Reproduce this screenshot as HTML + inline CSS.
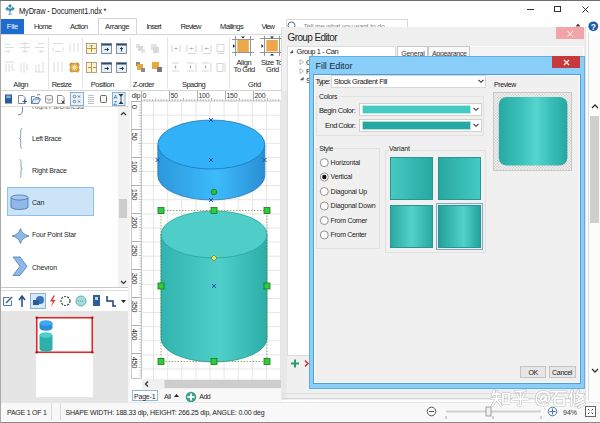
<!DOCTYPE html>
<html><head><meta charset="utf-8">
<style>
*{margin:0;padding:0;box-sizing:border-box}
html,body{width:600px;height:423px;overflow:hidden;background:#fff;font-family:"Liberation Sans",sans-serif;color:#1e1e1e;position:relative}
.a{position:absolute}
.t{position:absolute;white-space:nowrap;line-height:1}
svg{position:absolute;overflow:visible}
</style></head><body>
<!-- ============ TITLE BAR ============ -->
<div class="a" style="left:0;top:0;width:600px;height:1px;background:#6e6e6e"></div>
<svg style="left:5px;top:4px" width="10" height="11" viewBox="0 0 12 14">
 <path d="M6 0 L8.5 2.5 L6 5 L3.5 2.5Z M2.5 3.5 L5 6 L2.5 8.5 L0 6Z M9.5 3.5 L12 6 L9.5 8.5 L7 6Z M6 5 L8.5 7.5 L6 10 L3.5 7.5Z" fill="#2f8bb0"/>
 <path d="M6 9 V13 M4 13 H8" stroke="#3d7c99" stroke-width="1"/>
</svg>
<div class="t" id="ttl" style="left:18.5px;top:7px;font-size:9px;color:#1a1a1a;letter-spacing:-0.2px;transform:scaleX(0.83);transform-origin:0 0">MyDraw - Document1.ndx *</div>
<div class="a" style="left:527px;top:9px;width:7px;height:1px;background:#333"></div>
<div class="a" style="left:554px;top:6px;width:7px;height:6px;border:1px solid #333"></div>
<svg style="left:582px;top:6px" width="7" height="7"><path d="M0.5 0.5 L6.5 6.5 M6.5 0.5 L0.5 6.5" stroke="#333" stroke-width="1"/></svg>

<!-- ============ TABS ============ -->
<div class="a" style="left:1px;top:19px;width:23px;height:15px;background:#1e6cd0"></div>
<div class="t" style="left:6.8px;top:23px;font-size:7.5px;color:#fff;letter-spacing:-0.2px">File</div>
<div class="t" style="left:34px;top:23px;font-size:7.5px;letter-spacing:-0.61px">Home</div>
<div class="t" style="left:70px;top:23px;font-size:7.5px;letter-spacing:-0.53px">Action</div>
<div class="a" style="left:98px;top:18px;width:39px;height:17px;border:1px solid #d6d6d6;border-bottom:none;background:#fff"></div>
<div class="t" style="left:105px;top:23px;font-size:7.5px;letter-spacing:-0.37px">Arrange</div>
<div class="t" style="left:146.5px;top:23px;font-size:7.5px;letter-spacing:-0.73px">Insert</div>
<div class="t" style="left:180.5px;top:23px;font-size:7.5px;letter-spacing:-0.71px">Review</div>
<div class="t" style="left:220px;top:23px;font-size:7.5px;letter-spacing:-0.54px">Mailings</div>
<div class="t" style="left:261.5px;top:23px;font-size:7.5px;letter-spacing:-0.9px">View</div>
<div class="a" style="left:286px;top:19px;width:122px;height:14px;border:1px solid #d8d8d8;background:#fff"></div>
<svg style="left:287px;top:21px" width="10" height="10"><circle cx="4.5" cy="4.5" r="3.5" fill="none" stroke="#4a6a8a" stroke-width="1"/></svg>
<div class="t" style="left:303.5px;top:22.5px;font-size:7px;color:#8a8a8a;letter-spacing:-0.19px">Tell me what you want to do</div>
<div class="a" style="left:0;top:34px;width:600px;height:1px;background:#d8d8d8"></div>

<!-- ============ RIBBON ============ -->
<div class="a" style="left:0;top:90px;width:600px;height:1px;background:#d4d4d4"></div>
<div class="t" style="left:13.3px;top:81px;font-size:7.5px;letter-spacing:-0.38px">Align</div>
<div class="t" style="left:51.7px;top:81px;font-size:7.5px;letter-spacing:-0.55px">Resize</div>
<div class="t" style="left:90.7px;top:81px;font-size:7.5px;letter-spacing:-0.42px">Position</div>
<div class="t" style="left:132.7px;top:81px;font-size:7.5px;letter-spacing:-0.46px">Z-order</div>
<div class="t" style="left:182px;top:81px;font-size:7.5px;letter-spacing:-0.56px">Spacing</div>
<div class="t" style="left:248px;top:81px;font-size:7.5px;letter-spacing:-0.33px">Grid</div>
<div class="t" style="left:236.5px;top:59px;font-size:7.5px;letter-spacing:-0.38px">Align</div><div class="t" style="left:233.6px;top:66px;font-size:7.5px;letter-spacing:-0.43px">To Grid</div>
<div class="t" style="left:261px;top:59px;font-size:7.5px;letter-spacing:-0.45px">Size To</div><div class="t" style="left:266px;top:66px;font-size:7.5px;letter-spacing:-0.33px">Grid</div>
<div class="a" style="left:48px;top:37px;width:1px;height:52px;background:#e4e4e4"></div>
<div class="a" style="left:82px;top:37px;width:1px;height:52px;background:#e4e4e4"></div>
<div class="a" style="left:130px;top:37px;width:1px;height:52px;background:#e4e4e4"></div>
<div class="a" style="left:167px;top:37px;width:1px;height:52px;background:#e4e4e4"></div>
<div class="a" style="left:229px;top:37px;width:1px;height:52px;background:#e4e4e4"></div>
<svg style="left:0;top:35px" width="286" height="48" viewBox="0 0 286 48">
 <g stroke="#d8d8d8" stroke-width="0.9" fill="none">
  <!-- align -->
  <path d="M5 9.5h5 M5 12.5h9 M5 16.5h4 M9 15v3" stroke="#cfdcea"/><path d="M21 8.5h8 M20 12.5h10 M22 16.5h6 M25 7v11"/><path d="M38 8.5h6 M35 12.5h9 M39 16.5h5 M41 15v3"/>
  <path d="M5 27h10 M6 29v8 M9 29v8 M12 29v6h3"/><path d="M21 28v9 M24 27v11 M27 29v7"/><path d="M36 30v7 M39 29v8 M43 27v10 M35 37h10"/>
  <!-- resize -->
  <path d="M53 8.5h10 M53 12.5v4 M63 12.5v4 M55 16.5h6"/><path d="M70 8v9 M74 8v9 M78 8v9"/>
  <path d="M54 27v10 M58 27v10 M62 27v10"/>
 </g>
 <rect x="70.5" y="28.5" width="8" height="8" fill="#f3c466" stroke="#c98a20" stroke-width="0.8"/><rect x="72.5" y="30.5" width="4" height="4" fill="#fbe6b0"/><path d="M72 27v11 M77 27v11 M69 30h11 M69 35h11" stroke="#b07a20" stroke-width="0.7" stroke-dasharray="1 1"/>
 <!-- position -->
 <g stroke-width="0.8">
  <rect x="86.5" y="8.5" width="10" height="10" fill="#fdf3d4" stroke="#9a8a6a"/><path d="M87 13.5h9" stroke="#c9962e" stroke-width="1"/><path d="M91.5 10v3 M90 11.5l1.5-1.5 1.5 1.5 M91.5 14v3" stroke="#8a6a2a" stroke-width="0.7" fill="none"/>
  <rect x="101.5" y="8.5" width="10" height="10" fill="#e6f0fa" stroke="#6a7a8a"/><path d="M101.5 9.7h10" stroke="#2c4a6a" stroke-width="1.6"/><path d="M104.5 14.5h4 M107 13l1.5 1.5-1.5 1.5" stroke="#222" stroke-width="0.9" fill="none"/>
  <rect x="116.5" y="8.5" width="10" height="10" fill="#e6f0fa" stroke="#6a7a8a"/><path d="M116.5 9.7h10" stroke="#2c4a6a" stroke-width="1.6"/><path d="M121.5 16.5v-4 M120 14l1.5-1.5 1.5 1.5" stroke="#222" stroke-width="0.9" fill="none"/>
  <rect x="86.5" y="27.5" width="10" height="10" fill="#fdf3d4" stroke="#9a8a6a"/><path d="M91.5 28v9" stroke="#c9962e" stroke-width="1"/><path d="M88 32.5h3 M93 32.5h3" stroke="#8a6a2a" stroke-width="0.7"/>
  <rect x="101.5" y="27.5" width="10" height="10" fill="#e6f0fa" stroke="#6a7a8a"/><path d="M101.5 28.7h10" stroke="#2c4a6a" stroke-width="1.6"/><path d="M104.5 33.5h4 M107 32l1.5 1.5-1.5 1.5" stroke="#222" stroke-width="0.9" fill="none"/>
  <rect x="116.5" y="27.5" width="10" height="10" fill="#e6f0fa" stroke="#6a7a8a"/><path d="M116.5 28.7h10" stroke="#2c4a6a" stroke-width="1.6"/><path d="M119.5 33.5h4 M122 32l1.5 1.5-1.5 1.5" stroke="#222" stroke-width="0.9" fill="none"/>
 </g>
 <!-- z-order -->
 <rect x="136" y="9" width="4" height="4" fill="#e2e2e2"/><rect x="138" y="11" width="5" height="5" fill="#dadada"/><rect x="141" y="14" width="4" height="4" fill="#e4e4e4"/>
 <rect x="151" y="9" width="6" height="6" fill="#e2e2e2"/><rect x="153" y="12" width="6" height="6" fill="#d8d8d8"/>
 <rect x="136" y="27" width="4" height="4" fill="#8a8a8a"/><rect x="137" y="29" width="6" height="6" fill="#e4a83c"/><rect x="141" y="33" width="4" height="4" fill="#8a8a8a"/>
 <rect x="152" y="27" width="7" height="7" fill="#eaa838"/><rect x="157" y="32" width="5" height="5" fill="#7a7a7a"/>
 <!-- spacing -->
 <g stroke="#d0d0d0" fill="none" stroke-width="0.9">
  <path d="M172 10v7 M180 10v7 M174 13.5h4"/><path d="M187 10v7 M196 10v7 M189 13.5h5 M188 18.5h8" /><path d="M202 10v7 M211 10v7 M204 13.5h5 M203 18.5h8"/><path d="M217 9.5h7v7h-7z M218 18.5h6"/>
  <path d="M172 28h7 M172 36h7 M175.5 30v4"/><path d="M187 28h7 M187 36h7 M190.5 30v4 M196 28v9"/><path d="M202 28h7 M202 36h7 M205.5 30v4 M211 28v9"/><path d="M217 28.5h6v8h-6z M225 28v9"/>
 </g>
 <g fill="#a8a8a8"><circle cx="176" cy="13.5" r="0.9"/><circle cx="191.5" cy="13.5" r="0.9"/><circle cx="206.5" cy="13.5" r="0.9"/><circle cx="175.5" cy="32" r="0.9"/><circle cx="190.5" cy="32" r="0.9"/><circle cx="205.5" cy="32" r="0.9"/></g>
 <!-- grid -->
 <g>
  <rect x="237.3" y="5" width="11.5" height="12" fill="#eba84a"/>
  <path d="M232 4.5h22 M232 17.5h22 M235.5 1v20 M250.5 1v20" stroke="#8a8a8a" stroke-width="0.9"/>
  <path d="M241 1.5h4l-2 2z M233 9l2 2-2 2z" fill="#222"/>
  <rect x="266.3" y="5" width="11.5" height="11.5" fill="#eba84a"/>
  <path d="M260 3.5h25 M260 17.5h25 M264.5 1v20 M279.5 1v20" stroke="#8a8a8a" stroke-width="0.9"/>
  <path d="M270 1.5h4l-2 2z M270 20.5h4l-2-2z M261.5 9l2 2-2 2z" fill="#222"/>
 </g>
</svg>

<!-- ============ QUICK TOOLBAR ============ -->
<svg style="left:0;top:91px" width="130" height="16" viewBox="0 0 130 16">
 <rect x="5" y="3.5" width="7" height="9" fill="#2a5c98"/><rect x="6.3" y="4.6" width="4.4" height="2.6" fill="#7fb0e0"/>
 <path d="M18.5 4.5h4.5l2 2v6h-6.5z" fill="#fff" stroke="#6a6a6a" stroke-width="0.8"/><path d="M22.5 10.5h4.5 M24.75 8.25v4.5" stroke="#2c5f9a" stroke-width="1.1"/>
 <path d="M31.5 5.5h3l1 1h3.5v2" fill="none" stroke="#3c6a96" stroke-width="0.8"/><path d="M31.5 5.5v7h7l2-4.5h-7l-2 4.5" fill="#dce9f5" stroke="#3c6a96" stroke-width="0.8"/><path d="M37 4.5l2-1.5 1 1.5" stroke="#3c6a96" stroke-width="0.8" fill="none"/>
 <rect x="45.5" y="4.5" width="7" height="7.5" rx="1.5" fill="#f2f2f2" stroke="#7a7a7a" stroke-width="0.8"/><path d="M47 7.5l2 2 2-2" stroke="#666" stroke-width="0.8" fill="none"/>
 <path d="M57.5 4.5h4.5l2 2v6h-6.5z" fill="#fff" stroke="#6a6a6a" stroke-width="0.8"/><path d="M61.5 9.5l3 3 M64.5 9.5l-3 3" stroke="#333" stroke-width="0.9"/>
 <rect x="70.5" y="1.5" width="13" height="13" fill="#eaf2fa" stroke="#7eaedb"/>
 <circle cx="74.5" cy="5.5" r="1.3" fill="none" stroke="#4a5a6a" stroke-width="0.7"/><circle cx="74.5" cy="10.5" r="1.3" fill="none" stroke="#4a5a6a" stroke-width="0.7"/>
 <path d="M78 4.5l2 2 M80 4.5l-2 2 M78 9.5l2 2 M80 9.5l-2 2" stroke="#4a5a6a" stroke-width="0.8"/>
 <path d="M88 4.5h6 M88 6.5h6 M88 8.5h6 M88 10.5h6 M88 12.5h6" stroke="#aab4c0" stroke-width="0.8"/>
 <rect x="100.5" y="4.5" width="6" height="7" rx="1" fill="#f6f6f6" stroke="#555" stroke-width="0.9"/>
 <rect x="112.5" y="1.5" width="12.5" height="13" fill="#eaf2fa" stroke="#7eaedb"/>
 <text x="113.5" y="7.5" font-size="5.5" fill="#2c4a68" font-family="Liberation Sans">A</text><text x="113.5" y="13.5" font-size="5.5" fill="#2c5f9a" font-family="Liberation Sans">Z</text>
 <path d="M118.5 3h5l-2.5 3z M118.5 13h5l-2.5-3z" fill="#1f3a58"/><path d="M121 5.5v5" stroke="#1f3a58" stroke-width="0.8"/>
</svg>
<div class="a" style="left:1px;top:106px;width:128px;height:1px;background:#e2d8cc"></div>

<!-- ============ LEFT SHAPES PANEL ============ -->
<div class="a" style="left:128px;top:107px;width:1px;height:181px;background:#d0d0d0"></div>
<div class="a" style="left:118px;top:107px;width:10px;height:180px;background:#f2f2f2"></div>
<div class="a" style="left:119px;top:199px;width:8px;height:19px;background:#cdcdcd"></div>
<svg style="left:119px;top:110px" width="9" height="176"><path d="M2 5l2.5-2.5 2.5 2.5" stroke="#333" fill="none" stroke-width="1.2"/><path d="M2 171l2.5 2.5 2.5-2.5" stroke="#333" fill="none" stroke-width="1.2"/></svg>
<div class="a" style="left:1px;top:287px;width:128px;height:1px;background:#c8c8c8"></div>
<div class="a" style="left:1px;top:290px;width:128px;height:1px;background:#dcdcdc"></div>
<div class="a" style="left:7px;top:187px;width:87px;height:29px;background:#cce4f8;border:1px solid #8ec1ec"></div>
<svg style="left:0;top:105px" width="118" height="180" viewBox="0 0 118 180">
 <path d="M22.5 2 v3.5 q0 4 -4.5 4.5" stroke="#6a86a6" fill="none" stroke-width="1"/>
 <path d="M22.2 23.5 q-1.5 0 -1.5 2 v6.5 q0 1.5 -1.3 1.5 q1.3 0 1.3 1.5 v6.5 q0 2 1.5 2" stroke="#7a98b8" fill="none" stroke-width="0.9"/>
 <path d="M19.5 54.5 q1.5 0 1.5 2 v5.5 q0 1.5 1.3 1.5 q-1.3 0 -1.3 1.5 v5.5 q0 2 -1.5 2" stroke="#7a98b8" fill="none" stroke-width="0.9"/>
 <path d="M11 92.5 v9.5 a8.5 2.5 0 0 0 17 0 v-9.5" fill="#8fb8e8" stroke="#3f73b0" stroke-width="0.8"/>
 <ellipse cx="19.5" cy="92.5" rx="8.5" ry="2.5" fill="#a6c8f0" stroke="#3f73b0" stroke-width="0.8"/>
 <path d="M20.5 123.5 q1.5 6 8.5 7.5 q-7 1.5 -8.5 7.5 q-1.5 -6 -8.5 -7.5 q7 -1.5 8.5 -7.5z" fill="#8fb8e8" stroke="#4a7fb8" stroke-width="0.8"/>
 <path d="M13 152 h7 l7 9.2 l-7 9.3 h-7 l7 -9.3z" fill="#8fb8e8" stroke="#4a7fb8" stroke-width="0.8"/>
</svg>
<div class="a" style="left:30px;top:107px;width:60px;height:3px;overflow:hidden"><div class="t" style="left:2px;top:-4px;font-size:7px;letter-spacing:-0.2px;color:#666">Right Parenthesis</div></div>
<div class="t" style="left:32px;top:135px;font-size:7px;letter-spacing:-0.25px">Left Brace</div>
<div class="t" style="left:32px;top:167px;font-size:7px;letter-spacing:-0.17px">Right Brace</div>
<div class="t" style="left:32px;top:199px;font-size:7px;letter-spacing:-0.22px">Can</div>
<div class="t" style="left:32px;top:231px;font-size:7px;letter-spacing:-0.2px">Four Point Star</div>
<div class="t" style="left:32px;top:263.5px;font-size:7px;letter-spacing:-0.23px">Chevron</div>

<!-- ============ ICON TOOLBAR ============ -->
<svg style="left:0;top:288px" width="130" height="24" viewBox="0 0 130 24">
 <path d="M3.5 9.5h6 M3.5 9.5v8h8v-5" stroke="#4a7aa8" fill="none"/><path d="M6 15l6-6" stroke="#2c5f9a" stroke-width="1.5"/>
 <path d="M22 19v-10 M19 12l3-4 3 4" stroke="#1f4f86" stroke-width="1.5" fill="none"/>
 <rect x="30.5" y="5.5" width="15" height="15" fill="#d8e8f7" stroke="#86b4df"/>
 <circle cx="40" cy="12" r="4" fill="#3c72b8"/><rect x="33" y="12" width="6" height="5" fill="#2c5a98"/>
 <path d="M53.5 7.5l-3.5 6h3l-2.5 6 5-7.5h-3l2.5-4.5z" fill="#e53525"/>
 <circle cx="65.5" cy="13" r="4.5" fill="none" stroke="#444" stroke-width="1.2" stroke-dasharray="2 1.2"/>
 <circle cx="81" cy="13" r="5" fill="#a8dcdc" stroke="#5ab0b0"/><path d="M78 13h6" stroke="#4a9a9a" stroke-width="1.2" stroke-dasharray="1 1"/>
 <rect x="93" y="7" width="7" height="11" fill="#2c5f9a"/><rect x="95" y="9" width="3" height="3" fill="#bcd4ee"/>
 <path d="M107 8v5h6v5h3" stroke="#1f3f66" stroke-width="1.5" fill="none"/>
 <path d="M121 12h5l-2.5 3z" fill="#222"/>
</svg>

<!-- ============ THUMBNAIL ============ -->
<div class="a" style="left:1px;top:311px;width:127px;height:91px;background:#e5e5e5"></div>
<div class="a" style="left:36px;top:317px;width:57px;height:80px;background:#fff"></div>
<svg style="left:34px;top:315px" width="62" height="40"><rect x="2.75" y="2.75" width="55.5" height="34.5" fill="none" stroke="#e02a2a" stroke-width="1.6"/><g fill="#b01818"><circle cx="2.75" cy="2.75" r="1.3"/><circle cx="58.25" cy="2.75" r="1.3"/><circle cx="2.75" cy="37.25" r="1.3"/><circle cx="58.25" cy="37.25" r="1.3"/></g></svg>
<svg style="left:39px;top:320px" width="16" height="32" viewBox="0 0 16 32">
 <path d="M0.5 3 v5 a6.5 2.8 0 0 0 13 0 v-5" fill="#2c8fd8"/><ellipse cx="7" cy="3" rx="6.5" ry="2.8" fill="#3fa9f0"/>
 <path d="M0.5 15 v14 a6.5 2.8 0 0 0 13 0 v-14" fill="#2bb0aa"/><ellipse cx="7" cy="15" rx="6.5" ry="2.8" fill="#4ecfca"/>
</svg>
<div class="a" style="left:128px;top:91px;width:3px;height:309px;background:#f4f4f4"></div>

<!-- ============ CANVAS ============ -->
<svg style="left:130px;top:91px" width="155" height="310" viewBox="130 91 155 310">
 <defs>
  <linearGradient id="gb" x1="0" x2="1" y1="0" y2="0">
   <stop offset="0" stop-color="#2c98dc"/><stop offset="0.55" stop-color="#3dbbfb"/><stop offset="1" stop-color="#2a8ed4"/>
  </linearGradient>
  <linearGradient id="gt" x1="0" x2="1" y1="0" y2="0">
   <stop offset="0" stop-color="#31b3ae"/><stop offset="0.55" stop-color="#4fcfca"/><stop offset="1" stop-color="#2dada8"/>
  </linearGradient>
  <pattern id="grid" x="139" y="100.6" width="14.1" height="14.1" patternUnits="userSpaceOnUse">
   <path d="M0 0.5 H14.1 M0.5 0 V14.1" stroke="#e4e4e4" stroke-width="1" fill="none"/>
  </pattern>
 </defs>
 <rect x="130" y="91" width="155" height="310" fill="#fff"/>
 <rect x="142" y="102" width="139" height="277" fill="url(#grid)"/>
 <!-- top ruler -->
 <rect x="142" y="91" width="139" height="10.5" fill="#fff"/>
 <path d="M142 101 H281" stroke="#c8c8c8"/>
 <path d="M141.5 91v10 M169.5 91v10 M197.5 91v10 M225.5 91v10 M253.5 91v10 " stroke="#b0b0b0" stroke-width="1"/>
 <path d="M144.3 99v2 M147.1 99v2 M149.9 99v2 M152.7 99v2 M155.5 98v3 M158.3 99v2 M161.1 99v2 M163.9 99v2 M166.7 99v2 M172.3 99v2 M175.1 99v2 M177.9 99v2 M180.7 99v2 M183.5 98v3 M186.3 99v2 M189.1 99v2 M191.9 99v2 M194.7 99v2 M200.3 99v2 M203.1 99v2 M205.9 99v2 M208.7 99v2 M211.5 98v3 M214.3 99v2 M217.1 99v2 M219.9 99v2 M222.7 99v2 M228.3 99v2 M231.1 99v2 M233.9 99v2 M236.7 99v2 M239.5 98v3 M242.3 99v2 M245.1 99v2 M247.9 99v2 M250.7 99v2 M256.3 99v2 M259.1 99v2 M261.9 99v2 M264.7 99v2 M267.5 98v3 M270.3 99v2 M273.1 99v2 M275.9 99v2 M278.7 99v2 " stroke="#aaa" stroke-width="0.8"/>
 <g font-size="7" fill="#333" font-family="Liberation Sans" letter-spacing="-0.3">
  <text x="142.5" y="98">0</text>  <text x="170.5" y="98">50</text>  <text x="198.5" y="98">100</text>  <text x="226.5" y="98">150</text>  <text x="254.5" y="98">200</text>
  <text x="131.8" y="98" letter-spacing="-0.4">dip</text>
 </g>
 <!-- left ruler -->
 <rect x="131.5" y="101.5" width="10" height="277" fill="#fff" stroke="#c8c8c8"/>
 <path d="M131.5 101.5h10 M131.5 129.5h10 M131.5 157.5h10 M131.5 185.5h10 M131.5 213.5h10 M131.5 241.5h10 M131.5 269.5h10 M131.5 297.5h10 M131.5 325.5h10 M131.5 353.5h10 " stroke="#b0b0b0" stroke-width="1"/>
 <path d="M139.5 104.3h2 M139.5 107.1h2 M139.5 109.9h2 M139.5 112.7h2 M138.5 115.5h3 M139.5 118.3h2 M139.5 121.1h2 M139.5 123.9h2 M139.5 126.7h2 M139.5 132.3h2 M139.5 135.1h2 M139.5 137.9h2 M139.5 140.7h2 M138.5 143.5h3 M139.5 146.3h2 M139.5 149.1h2 M139.5 151.9h2 M139.5 154.7h2 M139.5 160.3h2 M139.5 163.1h2 M139.5 165.9h2 M139.5 168.7h2 M138.5 171.5h3 M139.5 174.3h2 M139.5 177.1h2 M139.5 179.9h2 M139.5 182.7h2 M139.5 188.3h2 M139.5 191.1h2 M139.5 193.9h2 M139.5 196.7h2 M138.5 199.5h3 M139.5 202.3h2 M139.5 205.1h2 M139.5 207.9h2 M139.5 210.7h2 M139.5 216.3h2 M139.5 219.1h2 M139.5 221.9h2 M139.5 224.7h2 M138.5 227.5h3 M139.5 230.3h2 M139.5 233.1h2 M139.5 235.9h2 M139.5 238.7h2 M139.5 244.3h2 M139.5 247.1h2 M139.5 249.9h2 M139.5 252.7h2 M138.5 255.5h3 M139.5 258.3h2 M139.5 261.1h2 M139.5 263.9h2 M139.5 266.7h2 M139.5 272.3h2 M139.5 275.1h2 M139.5 277.9h2 M139.5 280.7h2 M138.5 283.5h3 M139.5 286.3h2 M139.5 289.1h2 M139.5 291.9h2 M139.5 294.7h2 M139.5 300.3h2 M139.5 303.1h2 M139.5 305.9h2 M139.5 308.7h2 M138.5 311.5h3 M139.5 314.3h2 M139.5 317.1h2 M139.5 319.9h2 M139.5 322.7h2 M139.5 328.3h2 M139.5 331.1h2 M139.5 333.9h2 M139.5 336.7h2 M138.5 339.5h3 M139.5 342.3h2 M139.5 345.1h2 M139.5 347.9h2 M139.5 350.7h2 M139.5 356.3h2 M139.5 359.1h2 M139.5 361.9h2 M139.5 364.7h2 M138.5 367.5h3 M139.5 370.3h2 M139.5 373.1h2 M139.5 375.9h2 " stroke="#aaa" stroke-width="0.8"/>
 <g font-size="7.5" fill="#2a2a2a" font-family="Liberation Sans" letter-spacing="-0.45">
  <text transform="translate(131.8,104.8) rotate(90)">0</text>
  <text transform="translate(131.8,132.8) rotate(90)">50</text>
  <text transform="translate(131.8,160.8) rotate(90)">100</text>
  <text transform="translate(131.8,188.8) rotate(90)">150</text>
  <text transform="translate(131.8,216.8) rotate(90)">200</text>
  <text transform="translate(131.8,244.8) rotate(90)">250</text>
  <text transform="translate(131.8,272.8) rotate(90)">300</text>
  <text transform="translate(131.8,300.8) rotate(90)">350</text>
  <text transform="translate(131.8,328.8) rotate(90)">400</text>
  <text transform="translate(131.8,356.8) rotate(90)">450</text>
 </g>
 <!-- blue cylinder -->
 <path d="M157.8 145 V175.5 A53.5 24.5 0 0 0 264.8 175.5 V145 Z" fill="url(#gb)" stroke="#2a78b8" stroke-width="0.8"/>
 <ellipse cx="211.3" cy="144.5" rx="53.5" ry="24.5" fill="#31b1f8" stroke="#2274b8" stroke-width="0.8"/>
 <g stroke="#1f4fa8" stroke-width="1">
  <path d="M209 118l4 4 M213 118l-4 4"/><path d="M209 158l4 4 M213 158l-4 4"/><path d="M155.5 158l4 4 M159.5 158l-4 4"/><path d="M262.5 158l4 4 M266.5 158l-4 4"/><path d="M209 198l4 4 M213 198l-4 4"/>
 </g>
 <circle cx="214" cy="192" r="2.8" fill="#2fc03a" stroke="#157a1a" stroke-width="0.8"/>
 <!-- teal cylinder -->
 <path d="M161 234.5 V338.5 A53 23.5 0 0 0 267 338.5 V234.5 Z" fill="url(#gt)" stroke="#259a95" stroke-width="0.8"/>
 <ellipse cx="214" cy="234.5" rx="53" ry="23.5" fill="#4fcec9" stroke="#2aa39e" stroke-width="0.8"/>
 <!-- selection -->
 <rect x="161" y="210.5" width="106" height="151" fill="none" stroke="#6b8a3a" stroke-width="0.7" stroke-dasharray="1.5 1.5"/>
 <g fill="#2ecc3a" stroke="#157a1a" stroke-width="0.8">
  <rect x="158" y="207.5" width="6" height="6"/><rect x="211" y="207.5" width="6" height="6"/><rect x="264" y="207.5" width="6" height="6"/>
  <rect x="158" y="283" width="6" height="6"/><rect x="264" y="283" width="6" height="6"/>
  <rect x="158" y="358.5" width="6" height="6"/><rect x="211" y="358.5" width="6" height="6"/><rect x="264" y="358.5" width="6" height="6"/>
 </g>
 <path d="M214 255 l3 3 -3 3 -3 -3z" fill="#e8e860" stroke="#6a7a20" stroke-width="0.7"/>
 <path d="M212 284l4 4 M216 284l-4 4" stroke="#1f4fa8"/>
 <!-- h scroll -->
 <rect x="142" y="379" width="140" height="10" fill="#f0f0f0"/>
 <rect x="164.5" y="380" width="117" height="8" fill="#cdcdcd"/>
 <path d="M148 381.5l-2.5 2.5 2.5 2.5" stroke="#333" stroke-width="1.3" fill="none"/>
 <path d="M281.5 91 V400" stroke="#dcdcdc"/>
</svg>
<!-- page tabs -->
<div class="a" style="left:128px;top:389px;width:153px;height:13px;background:#f8f8f8"></div>
<div class="a" style="left:132px;top:389.5px;width:26px;height:11.5px;background:#fff;border:1px solid #8fb8dd"></div>
<div class="t" style="left:134px;top:392.5px;font-size:7px;letter-spacing:-0.2px">Page-1</div>
<div class="t" style="left:164px;top:392.5px;font-size:7px;letter-spacing:-0.36px">All</div>
<svg style="left:174px;top:393px" width="6" height="5"><path d="M0 4h5l-2.5-3z" fill="#222"/></svg>
<svg style="left:185px;top:391px" width="12" height="12"><circle cx="6" cy="6" r="5.3" fill="#3aa48a"/><path d="M6 2.5v7 M2.5 6h7" stroke="#fff" stroke-width="1.8"/></svg>
<div class="t" style="left:199.2px;top:392.5px;font-size:7px;letter-spacing:-0.48px">Add</div>

<!-- ============ STATUS BAR ============ -->
<div class="a" style="left:0;top:402px;width:600px;height:21px;background:#f8f8f8;border-top:1px solid #e6e6e6"></div>
<div class="a" style="left:0;top:422px;width:600px;height:1px;background:#888"></div>
<div class="t" style="left:7px;top:409px;font-size:7px;letter-spacing:-0.24px">PAGE 1 OF 1</div>
<div class="a" style="left:51px;top:403px;width:1px;height:17px;background:#dcdcdc"></div>
<div class="a" style="left:60px;top:403px;width:1px;height:17px;background:#dcdcdc"></div>
<div class="t" style="left:65.5px;top:409px;font-size:7px;letter-spacing:-0.18px">SHAPE WIDTH: 188.33 dip, HEIGHT: 266.25 dip, ANGLE: 0.00 deg</div>
<svg style="left:426px;top:406px" width="170" height="14">
 <circle cx="5.5" cy="5.5" r="4.3" fill="none" stroke="#555" stroke-width="1"/><path d="M3 5.5h5" stroke="#555"/>
 <path d="M20 5.5 H115" stroke="#cfcfcf" stroke-width="2"/>
 <path d="M20 10v3 M67 10v3 M115 10v3" stroke="#aaa"/>
 <rect x="60" y="1" width="5" height="9" fill="#f2f2f2" stroke="#8a8a8a" stroke-width="0.8"/>
 <circle cx="126.5" cy="5.5" r="4.3" fill="none" stroke="#4a7aa8" stroke-width="1"/><path d="M123.5 5.5h6 M126.5 2.5v6" stroke="#4a7aa8"/>
 <text x="137" y="9" font-size="7" fill="#333" font-family="Liberation Sans">94%</text>
 <rect x="159.5" y="0.5" width="10" height="10" fill="#fff" stroke="#666"/><path d="M162 3l1.5 1.5 M167 3l-1.5 1.5 M162 8l1.5-1.5 M167 8l-1.5-1.5" stroke="#444"/>
</svg>

<!-- ============ GROUP EDITOR ============ -->
<div class="a" style="left:281px;top:27px;width:305px;height:373px;background:#f0f0f0;border-left:1px solid #dedede;border-right:1px solid #e0e0e0"></div>
<div class="a" style="left:281px;top:91px;width:6px;height:309px;background:#e8e8e8"></div>
<div class="a" style="left:282px;top:27px;width:303px;height:19px;background:#efefef"></div>
<div class="t" style="left:287.5px;top:32.5px;font-size:10px;color:#222;letter-spacing:-0.61px">Group Editor</div>
<div class="a" style="left:556px;top:27px;width:28px;height:12px;background:#f2a5a8"></div>
<svg style="left:566px;top:29.5px" width="9" height="8"><path d="M1.5 1l5.5 5.5 M7 1l-5.5 5.5" stroke="#fff" stroke-width="1"/></svg>
<svg style="left:587.5px;top:20.8px" width="11" height="11"><circle cx="5.3" cy="5.3" r="4.9" fill="#1f5ea8"/><text x="2.7" y="8.7" font-size="8.5" font-weight="bold" fill="#fff" font-family="Liberation Sans">?</text></svg>
<svg style="left:575px;top:23px" width="6" height="4"><path d="M0.5 3.5l2.5-3 2.5 3z" fill="#444"/></svg>
<div class="a" style="left:287px;top:46px;width:109px;height:310px;background:#fff;border:1px solid #dcdcdc"></div>
<div class="t" style="left:296.5px;top:48px;font-size:7.5px;color:#222;letter-spacing:-0.45px">Group 1 - Can</div>
<svg style="left:289px;top:49px" width="20" height="34"><path d="M1 4 L3.8 1.2 V4Z" fill="#555" stroke="#555" stroke-width="0.5"/><path d="M11 10.5l3.5 2.5-3.5 2.5z M11 19.5l3.5 2.5-3.5 2.5z" fill="none" stroke="#aaa" stroke-width="0.8"/><path d="M11.5 31 L14.3 28.2 V31Z" fill="#555" stroke="#555" stroke-width="0.5"/></svg>
<div class="t" style="left:306px;top:58.5px;font-size:7.5px;color:#222">C</div>
<div class="t" style="left:306px;top:67.5px;font-size:7.5px;color:#222">R</div>
<div class="t" style="left:306px;top:76.5px;font-size:7.5px;color:#222">S</div>
<div class="a" style="left:397px;top:46px;width:31px;height:11px;background:#fff;border:1px solid #c8c8c8;border-bottom:none"></div>
<div class="t" style="left:401.2px;top:50px;font-size:7px;color:#333;letter-spacing:-0.22px">General</div>
<div class="a" style="left:428px;top:46px;width:42px;height:11px;background:#f8f8f8;border:1px solid #c8c8c8;border-bottom:none"></div>
<div class="t" style="left:432px;top:50px;font-size:7px;color:#333;letter-spacing:-0.32px">Appearance</div>
<div class="a" style="left:470px;top:46px;width:114px;height:10px;background:#f3f3f3;border-top:1px solid #fcfcfc;border-right:1px solid #fcfcfc"></div>
<div class="a" style="left:397px;top:56px;width:187px;height:2px;background:#fff;border-top:1px solid #d0d0d0"></div>
<svg style="left:290px;top:359px" width="22" height="10"><path d="M5 0.5v8 M1 4.5h8" stroke="#2a9a6a" stroke-width="2"/><path d="M15 1.5l3 3-3 3" stroke="#c83030" stroke-width="1.5" fill="none"/></svg>
<div class="a" style="left:282px;top:393px;width:303px;height:1px;background:#dcdcdc"></div>
<div class="a" style="left:282px;top:398px;width:303px;height:1px;background:#d4d4d4"></div>
<!-- right column -->
<div class="a" style="left:586px;top:34px;width:14px;height:366px;background:#fcfcfc"></div>
<div class="a" style="left:588px;top:32px;width:1px;height:368px;background:#dcdcdc"></div>
<div class="a" style="left:590px;top:116px;width:9px;height:107px;background:#cfcfcf"></div>
<svg style="left:590px;top:102px" width="10" height="8"><path d="M2 6l3-3 3 3" stroke="#333" stroke-width="1.3" fill="none"/></svg>
<svg style="left:590px;top:366px" width="10" height="10"><path d="M2 3l3 3 3-3" stroke="#333" stroke-width="1.3" fill="none"/></svg>

<!-- ============ FILL EDITOR ============ -->
<div class="a" style="left:309px;top:56px;width:276px;height:333px;background:#8acff9;border:1px solid #62aee0"></div>
<div class="t" style="left:315.5px;top:62px;font-size:9px;color:#1a2a3a;letter-spacing:-0.05px">Fill Editor</div>
<div class="a" style="left:552px;top:56px;width:28px;height:12px;background:#c8393c"></div>
<svg style="left:562px;top:58.5px" width="10" height="8"><path d="M2 1l5 5 M7 1l-5 5" stroke="#fff" stroke-width="1.1"/></svg>
<div class="a" style="left:313px;top:74px;width:268px;height:310px;background:#4f9fd8;padding:1px"><div style="width:100%;height:100%;background:#f0f0f0;border:1px solid #fafcfe"></div></div>
<!-- type -->
<div class="t" style="left:315.5px;top:78px;font-size:7.5px;color:#222;letter-spacing:-0.9px">Type:</div>
<div class="a" style="left:331px;top:75px;width:155px;height:13px;background:#fff;border:1px solid #d8d8d8"></div>
<div class="t" style="left:333.8px;top:78px;font-size:7.5px;color:#222;letter-spacing:-0.42px">Stock Gradient Fill</div>
<svg style="left:477px;top:78px" width="8" height="6"><path d="M1.5 1.8l2.5 2.5 2.5-2.5" stroke="#333" stroke-width="1.1" fill="none"/></svg>
<!-- colors group -->
<div class="a" style="left:316px;top:96px;width:168px;height:40px;border:1px solid #e2e2e2"></div>
<div class="t" style="left:319px;top:93px;font-size:7px;color:#222;letter-spacing:-0.35px;background:#f0f0f0;padding-right:2px">Colors</div>
<div class="t" style="left:319px;top:107px;font-size:7.5px;color:#222;letter-spacing:-0.41px">Begin Color:</div>
<div class="a" style="left:359px;top:103px;width:123px;height:13px;background:#fff;border:1px solid #d0d0d0"></div>
<div class="a" style="left:361.5px;top:105px;width:109px;height:9px;background:#44c9c3;border:1px solid #bfe8e6"></div>
<svg style="left:472px;top:106px" width="8" height="6"><path d="M1.5 1.8l2.5 2.5 2.5-2.5" stroke="#333" stroke-width="1.1" fill="none"/></svg>
<div class="t" style="left:325px;top:122px;font-size:7.5px;color:#222;letter-spacing:-0.52px">End Color:</div>
<div class="a" style="left:359px;top:119px;width:123px;height:13px;background:#fff;border:1px solid #d0d0d0"></div>
<div class="a" style="left:361.5px;top:121px;width:109px;height:9px;background:#24a9a2;border:1px solid #b5dedb"></div>
<svg style="left:472px;top:122px" width="8" height="6"><path d="M1.5 1.8l2.5 2.5 2.5-2.5" stroke="#333" stroke-width="1.1" fill="none"/></svg>
<!-- style group -->
<div class="a" style="left:316px;top:148px;width:64px;height:101px;border:1px solid #e0e0e0"></div>
<div class="t" style="left:319.2px;top:145px;font-size:7px;color:#222;background:#f0f0f0;padding-right:1px;letter-spacing:-0.34px">Style</div>
<svg style="left:318px;top:155px" width="14" height="88">
 <g fill="#fff" stroke="#777" stroke-width="0.8"><circle cx="6.3" cy="7.6" r="4"/><circle cx="6.3" cy="22" r="4"/><circle cx="6.3" cy="36.5" r="4"/><circle cx="6.3" cy="51" r="4"/><circle cx="6.3" cy="65.5" r="4"/><circle cx="6.3" cy="80" r="4"/></g>
 <circle cx="6.3" cy="22" r="2.2" fill="#111"/>
</svg>
<div class="t" style="left:330.6px;top:159.2px;font-size:7px;color:#222;letter-spacing:-0.22px">Horizontal</div>
<div class="t" style="left:330.6px;top:173.4px;font-size:7px;color:#222;letter-spacing:-0.17px">Vertical</div>
<div class="t" style="left:330.6px;top:187.8px;font-size:7px;color:#222;letter-spacing:-0.19px">Diagonal Up</div>
<div class="t" style="left:330.6px;top:202.4px;font-size:7px;color:#222;letter-spacing:-0.2px">Diagonal Down</div>
<div class="t" style="left:330.6px;top:216.9px;font-size:7px;color:#222;letter-spacing:-0.29px">From Corner</div>
<div class="t" style="left:330.6px;top:231.4px;font-size:7px;color:#222;letter-spacing:-0.32px">From Center</div>
<!-- variant group -->
<div class="a" style="left:385px;top:150px;width:101px;height:103px;border:1px solid #e0e0e0"></div>
<div class="t" style="left:389px;top:145px;font-size:7px;color:#222;background:#f0f0f0;padding-right:1px;letter-spacing:-0.1px">Variant</div>
<svg style="left:385px;top:150px" width="101" height="103" viewBox="385 150 101 103">
 <defs>
  <linearGradient id="v1" x1="0" x2="1"><stop offset="0" stop-color="#45cbc4"/><stop offset="1" stop-color="#28a7a1"/></linearGradient>
  <linearGradient id="v2" x1="0" x2="1"><stop offset="0" stop-color="#28a7a1"/><stop offset="1" stop-color="#45cbc4"/></linearGradient>
  <linearGradient id="v3" x1="0" x2="1"><stop offset="0" stop-color="#2aa9a3"/><stop offset="0.5" stop-color="#52d0ca"/><stop offset="1" stop-color="#2aa9a3"/></linearGradient>
  <linearGradient id="v4" x1="0" x2="1"><stop offset="0" stop-color="#23a09a"/><stop offset="0.6" stop-color="#52d0ca"/><stop offset="1" stop-color="#23a09a"/></linearGradient>
 </defs>
 <rect x="390.5" y="157.5" width="42" height="42" fill="url(#v1)" stroke="#2a9590"/>
 <rect x="438.5" y="157.5" width="42" height="42" fill="url(#v2)" stroke="#2a9590"/>
 <rect x="390.5" y="205.5" width="42" height="42" fill="url(#v3)" stroke="#2a9590"/>
 <rect x="436.5" y="203.5" width="46" height="46" fill="#e4eef6" stroke="#8aa6c0"/>
 <rect x="438.5" y="205.5" width="42" height="42" fill="url(#v4)" stroke="#2a9590"/>
</svg>
<!-- preview -->
<div class="t" style="left:494px;top:81px;font-size:7px;color:#222;letter-spacing:-0.42px">Preview</div>
<svg style="left:492px;top:92px" width="82" height="82" viewBox="0 0 82 82">
 <defs>
  <pattern id="chk" width="3" height="3" patternUnits="userSpaceOnUse"><rect width="3" height="3" fill="#f8f6f6"/><rect width="1.5" height="1.5" fill="#d6cfcf"/><rect x="1.5" y="1.5" width="1.5" height="1.5" fill="#d6cfcf"/></pattern>
  <linearGradient id="pv" x1="0" x2="1"><stop offset="0" stop-color="#27a9a3"/><stop offset="0.3" stop-color="#38bfb9"/><stop offset="0.55" stop-color="#55d5cf"/><stop offset="0.78" stop-color="#36bdb7"/><stop offset="1" stop-color="#26a7a1"/></linearGradient>
 </defs>
 <rect x="1.5" y="0.5" width="78" height="78" fill="url(#chk)" stroke="#c8c8c8"/>
 <rect x="6.8" y="5" width="68.6" height="68.6" rx="8" fill="url(#pv)"/>
</svg>
<!-- buttons -->
<div class="a" style="left:520px;top:366px;width:26px;height:12px;background:#e6e6e6;border:1px solid #c4c4c4"></div>
<div class="t" style="left:528.4px;top:369px;font-size:7px;color:#222;letter-spacing:-0.44px">OK</div>
<div class="a" style="left:549px;top:366px;width:27px;height:12px;background:#e6e6e6;border:1px solid #c4c4c4"></div>
<div class="t" style="left:552.1px;top:369px;font-size:7px;color:#222;letter-spacing:-0.31px">Cancel</div>

<!-- watermark -->
<svg style="left:490px;top:389px" width="96" height="19" viewBox="0 0 96 19">
 <g fill="none" stroke-linecap="round" stroke-linejoin="round" transform="translate(1.5,1.2)">
  <g stroke="#bdbdbd" stroke-width="2.8"><path d="M3 0.5 L1 5 M1.5 4 H9 M0.5 8.5 H9.5 M5 1.5 V8.5 L1 15 M5.5 9.5 L9.5 15 M11.5 3.5 H17.5 V13 H11.5 Z"/>
  <path transform="translate(21,0)" d="M3 1.5 L13 0.5 M4.5 4 L6 7 M11.5 4 L10 7 M0.5 9 H15.5 M8 2 V14 Q8 16 5.5 15"/>
  <path transform="translate(44,1)" d="M10 5 Q8 4 6 5.5 Q4.5 8 6 9.5 Q8 10 9.5 8 L10.5 5 V9 Q11 11 13 9.5 Q14.5 7 13.5 4 Q12 0.5 7.5 0.5 Q1 1 0.8 7.5 Q1 14 7.5 14 Q10 14 12 13"/>
  <path transform="translate(59,0)" d="M0.5 1.5 H15.5 M7 1.5 L1.5 9 M4.5 8 H13.5 V15 H4.5 Z M4.5 15 V8"/>
  <path transform="translate(77,0)" d="M4 0.5 L1 7 M3 4 V15.5 M6 4 V12 M10 0.5 L8 4.5 H15 L9.5 9.5 M10.5 4.5 L15.5 9 M14.5 9 L8 12 M15.5 11 L7 15.5 M16 13.5 L10 17"/></g>
  <g stroke="#ffffff" stroke-width="1.7"><path d="M3 0.5 L1 5 M1.5 4 H9 M0.5 8.5 H9.5 M5 1.5 V8.5 L1 15 M5.5 9.5 L9.5 15 M11.5 3.5 H17.5 V13 H11.5 Z"/>
  <path transform="translate(21,0)" d="M3 1.5 L13 0.5 M4.5 4 L6 7 M11.5 4 L10 7 M0.5 9 H15.5 M8 2 V14 Q8 16 5.5 15"/>
  <path transform="translate(44,1)" d="M10 5 Q8 4 6 5.5 Q4.5 8 6 9.5 Q8 10 9.5 8 L10.5 5 V9 Q11 11 13 9.5 Q14.5 7 13.5 4 Q12 0.5 7.5 0.5 Q1 1 0.8 7.5 Q1 14 7.5 14 Q10 14 12 13"/>
  <path transform="translate(59,0)" d="M0.5 1.5 H15.5 M7 1.5 L1.5 9 M4.5 8 H13.5 V15 H4.5 Z M4.5 15 V8"/>
  <path transform="translate(77,0)" d="M4 0.5 L1 7 M3 4 V15.5 M6 4 V12 M10 0.5 L8 4.5 H15 L9.5 9.5 M10.5 4.5 L15.5 9 M14.5 9 L8 12 M15.5 11 L7 15.5 M16 13.5 L10 17"/></g>
 </g>
</svg>
<div class="a" style="left:0;top:1px;width:1px;height:422px;background:#a8a8a8"></div>
</body></html>
